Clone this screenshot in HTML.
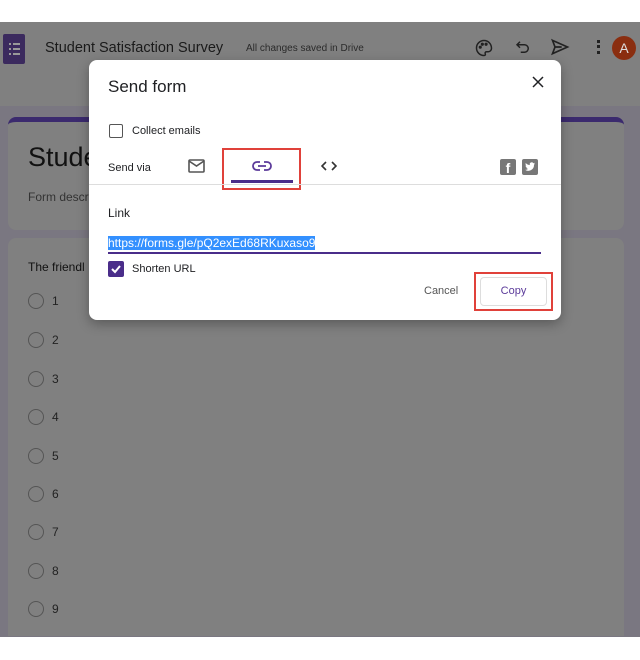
<!DOCTYPE html>
<html><head><meta charset="utf-8"><style>
*{margin:0;padding:0;box-sizing:border-box}
body{width:640px;height:660px;background:#fff;font-family:"Liberation Sans",Arial,sans-serif;position:relative;overflow:hidden}
.abs{position:absolute}
.page{left:0;top:22px;width:640px;height:615px;background:#7a7781}
.hdr{left:0;top:22px;width:640px;height:84px;background:#808080}
.card{background:#808080;border-radius:8px}
.t{color:#222;position:absolute;white-space:nowrap}
.radio{width:16px;height:16px;border:1.5px solid #555;border-radius:50%;position:absolute;left:28px}
.num{position:absolute;left:52px;font-size:12px;color:#222}
.modal{left:89px;top:60px;width:472px;height:260px;background:#fff;border-radius:8px;box-shadow:0 4px 12px rgba(0,0,0,.3)}
.ln{position:absolute;left:9px;width:11px;height:2px}
.ln:before{content:"";position:absolute;left:0;top:0;width:2px;height:2px;background:#999}
.ln:after{content:"";position:absolute;left:4px;top:0;width:7px;height:2px;background:#999}
</style></head><body>
<div class="abs page"></div>
<div class="abs hdr"></div>
<div class="abs" style="left:3px;top:34px;width:22px;height:30px;background:#3b2a5e;border-radius:2px"></div>
<div class="ln" style="top:43px"></div>
<div class="ln" style="top:48px"></div>
<div class="ln" style="top:53px"></div>
<div class="t" style="left:45px;top:40px;font-size:14.5px;color:#1a1a1a">Student Satisfaction Survey</div>
<div class="t" style="left:246px;top:43px;font-size:10px;color:#2a2a2a">All changes saved in Drive</div>
<svg class="abs" style="left:474px;top:38px" width="20" height="20" viewBox="0 0 24 24" fill="none" stroke="#222" stroke-width="1.8"><path d="M12 3a9 9 0 1 0 0 18c1.5 0 2-1 1.5-2s0-2.5 1.5-2.5H17a4 4 0 0 0 4-4C21 7 17 3 12 3z"/><circle cx="7.5" cy="11" r="1" fill="#222"/><circle cx="10" cy="7.5" r="1" fill="#222"/><circle cx="14.5" cy="7.5" r="1" fill="#222"/></svg>
<svg class="abs" style="left:514px;top:38px" width="18" height="18" viewBox="0 0 24 24" fill="none" stroke="#222" stroke-width="2"><path d="M8 5L4 9l4 4M4 9h10a5 5 0 0 1 0 10H9"/></svg>
<svg class="abs" style="left:550px;top:37px" width="20" height="20" viewBox="0 0 24 24" fill="none" stroke="#222" stroke-width="2"><path d="M3 4l18 8-18 8 3-8zM6 12h8"/></svg>
<div class="abs" style="left:597px;top:40px;width:3px;height:14px;border-left:3px dotted #222"></div>
<div class="abs" style="left:612px;top:36px;width:24px;height:24px;border-radius:50%;background:#8a2e10;color:#ddd;font-size:14px;text-align:center;line-height:24px">A</div>

<div class="abs card" style="left:8px;top:117px;width:616px;height:113px;border-top:5px solid #3b2a6e"></div>
<div class="t" style="left:28px;top:142px;font-size:27px;color:#111">Stude</div>
<div class="t" style="left:28px;top:190px;font-size:12px;color:#333">Form descri</div>
<div class="abs card" style="left:8px;top:238px;width:616px;height:398px;border-radius:8px 8px 0 0"></div>
<div class="t" style="left:28px;top:260px;font-size:12px;color:#111">The friendl</div>
<div class="radio" style="top:293px"></div><div class="num" style="top:294px">1</div>
<div class="radio" style="top:332px"></div><div class="num" style="top:333px">2</div>
<div class="radio" style="top:371px"></div><div class="num" style="top:372px">3</div>
<div class="radio" style="top:409px"></div><div class="num" style="top:410px">4</div>
<div class="radio" style="top:448px"></div><div class="num" style="top:449px">5</div>
<div class="radio" style="top:486px"></div><div class="num" style="top:487px">6</div>
<div class="radio" style="top:524px"></div><div class="num" style="top:525px">7</div>
<div class="radio" style="top:563px"></div><div class="num" style="top:564px">8</div>
<div class="radio" style="top:601px"></div><div class="num" style="top:602px">9</div>

<div class="abs modal"></div>
<div class="t" style="left:108px;top:77px;font-size:17px;color:#202124">Send form</div>
<svg class="abs" style="left:532px;top:76px" width="12" height="12" viewBox="0 0 12 12" stroke="#202124" stroke-width="1.5"><path d="M1 1l10 10M11 1L1 11"/></svg>
<div class="abs" style="left:109px;top:124px;width:14px;height:14px;border:1px solid #555;border-radius:2px"></div>
<div class="t" style="left:132px;top:125px;font-size:11px;color:#202124">Collect emails</div>
<div class="t" style="left:108px;top:162px;font-size:11px;color:#202124">Send via</div>
<svg class="abs" style="left:188px;top:159px" width="17" height="14" viewBox="0 0 17 14" fill="none" stroke="#555" stroke-width="1.6"><rect x="1" y="1" width="15" height="12" rx="1"/><path d="M1 2l7.5 5L16 2"/></svg>
<div class="abs" style="left:222px;top:148px;width:79px;height:42px;border:2px solid #e0413a"></div>
<svg class="abs" style="left:252px;top:160px" width="20" height="12" viewBox="0 0 20 12" fill="none" stroke="#5b3a9a" stroke-width="1.8"><path d="M8 2H5a4 4 0 0 0 0 8h3M12 2h3a4 4 0 0 1 0 8h-3M6 6h8"/></svg>
<div class="abs" style="left:231px;top:180px;width:62px;height:3px;background:#4a2d8a"></div>
<svg class="abs" style="left:321px;top:160px" width="16" height="12" viewBox="0 0 16 12" fill="none" stroke="#333" stroke-width="1.6"><path d="M5 2L1 6l4 4M11 2l4 4-4 4"/></svg>
<div class="abs" style="left:500px;top:159px;width:16px;height:16px;background:#777;border-radius:2px;color:#fff;font-weight:bold;font-size:14px;text-align:center;line-height:18px;overflow:hidden">f</div>
<svg class="abs" style="left:522px;top:159px" width="16" height="16" viewBox="0 0 16 16"><rect width="16" height="16" rx="2" fill="#777"/><path d="M13 4.5c-.4.2-.8.3-1.2.3.4-.3.7-.7.9-1.1-.4.2-.9.4-1.3.5a2 2 0 0 0-3.5 1.9C6.200 6 4.700 5.200 3.800 4c-.5 1-.2 2 .6 2.700-.3 0-.6-.1-.9-.2 0 1 .7 1.800 1.600 2-.3.1-.6.1-.9 0 .3.800 1 1.400 1.900 1.400A4 4 0 0 1 3 10.800 5.700 5.700 0 0 0 12 6v-.3c.4-.3.7-.7 1-1.200z" fill="#fff"/></svg>
<div class="abs" style="left:89px;top:184px;width:472px;height:1px;background:#ddd"></div>
<div class="t" style="left:108px;top:206px;font-size:12px;color:#202124">Link</div>
<div class="t" style="left:108px;top:236px;font-size:12px;color:#fff;background:#3390ff;line-height:14px">https://forms.gle/pQ2exEd68RKuxaso9</div>
<div class="abs" style="left:108px;top:252px;width:433px;height:2px;background:#4a2d8a"></div>
<div class="abs" style="left:108px;top:261px;width:16px;height:16px;background:#4a2d8a;border-radius:2px"></div>
<svg class="abs" style="left:110px;top:263px" width="12" height="12" viewBox="0 0 12 12" fill="none" stroke="#fff" stroke-width="2"><path d="M2 6l3 3 5-6"/></svg>
<div class="t" style="left:132px;top:263px;font-size:11px;color:#202124">Shorten URL</div>
<div class="t" style="left:424px;top:285px;font-size:11px;color:#555">Cancel</div>
<div class="abs" style="left:474px;top:272px;width:79px;height:39px;border:2px solid #e0413a"></div>
<div class="abs" style="left:480px;top:277px;width:67px;height:29px;border:1px solid #ddd;border-radius:4px;color:#5b3a9a;font-size:11px;text-align:center;line-height:27px">Copy</div>
</body></html>
